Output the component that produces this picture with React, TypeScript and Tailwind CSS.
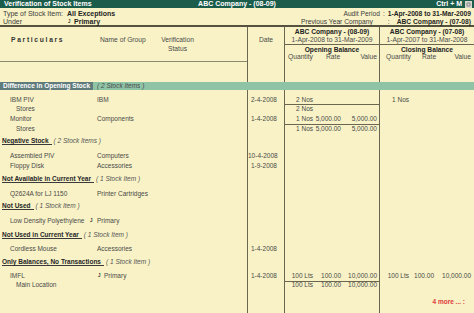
import React from 'react';

type Trio = [string, string, string];

interface Row {
  h: string;
  kind: 'spacer' | 'band' | 'head' | 'item' | 'more';
  name?: string;
  sub?: boolean;
  count?: string;
  group?: string;
  primary?: 'near' | 'far';
  date?: string;
  open?: Trio;
  close?: Trio;
  line?: boolean;
}

const nos2: Trio = ['2 Nos', '', ''];
const nos1: Trio = ['1 Nos', '', ''];
const nosVal: Trio = ['1 Nos', '5,000.00', '5,000.00'];
const lts: Trio = ['100 Lts', '100.00', '10,000.00'];

const rows: Row[] = [
  { h: 'h-[20px]', kind: 'spacer' },
  { h: 'h-[8px]', kind: 'band', name: 'Difference in Opening Stock', count: '( 2 Stock Items )' },
  { h: 'h-[6px]', kind: 'spacer' },
  { h: 'h-[9px]', kind: 'item', name: 'IBM PIV', group: 'IBM', date: '2-4-2008', open: nos2, close: nos1, line: true },
  { h: 'h-[10px]', kind: 'item', name: 'Stores', sub: true, open: nos2 },
  { h: 'h-[10px]', kind: 'item', name: 'Monitor', group: 'Components', date: '1-4-2008', open: nosVal, line: true },
  { h: 'h-[12px]', kind: 'item', name: 'Stores', sub: true, open: nosVal },
  { h: 'h-[15px]', kind: 'head', name: 'Negative Stock', count: '( 2 Stock Items )' },
  { h: 'h-[10px]', kind: 'item', name: 'Assembled PIV', group: 'Computers', date: '10-4-2008' },
  { h: 'h-[13px]', kind: 'item', name: 'Floppy Disk', group: 'Accessories', date: '1-9-2008' },
  { h: 'h-[15px]', kind: 'head', name: 'Not Available in Current Year', count: '( 1 Stock Item )' },
  { h: 'h-[12px]', kind: 'item', name: 'Q2624A for LJ 1150', group: 'Printer Cartridges' },
  { h: 'h-[15px]', kind: 'head', name: 'Not Used', count: '( 1 Stock Item )' },
  { h: 'h-[14px]', kind: 'item', name: 'Low Density Polyethylene', primary: 'near' },
  { h: 'h-[14px]', kind: 'head', name: 'Not Used in Current Year', count: '( 1 Stock Item )' },
  { h: 'h-[13px]', kind: 'item', name: 'Cordless Mouse', group: 'Accessories', date: '1-4-2008' },
  { h: 'h-[14px]', kind: 'head', name: 'Only Balances, No Transactions', count: '( 1 Stock Item )' },
  { h: 'h-[9px]', kind: 'item', name: 'IMFL', primary: 'far', date: '1-4-2008', open: lts, close: lts, line: true },
  { h: 'h-[16px]', kind: 'item', name: 'Main Location', sub: true, open: lts },
  { h: 'h-[16px]', kind: 'more' },
];

const COLS = 'grid grid-cols-[247px_37px_95px_95px]';
const VLINE = 'border-l border-[#6a6650]';

const Glyph = () => <span className="text-[4.5px] font-bold align-super text-[#333]">J</span>;

function Amounts({ v, layout }: { v?: Trio; layout: string }) {
  if (!v) return null;
  return (
    <div className={`grid text-right ${layout}`}>
      <span>{v[0]}</span>
      <span>{v[1]}</span>
      <span>{v[2]}</span>
    </div>
  );
}

function GroupCell({ row }: { row: Row }) {
  if (row.primary === 'near') {
    return (
      <span className="flex">
        <span className="w-[7px]"><Glyph /></span>
        <span>Primary</span>
      </span>
    );
  }
  if (row.primary === 'far') {
    return (
      <span className="flex pl-[8px]">
        <span className="w-[6px]"><Glyph /></span>
        <span>Primary</span>
      </span>
    );
  }
  return <span className="pl-[7px]">{row.group}</span>;
}

function BodyRow({ row }: { row: Row }) {
  if (row.kind === 'band') {
    return (
      <div className={`flex items-center bg-[#8fc3a6] leading-[8px] ${row.h}`}>
        <span className="w-[93px] bg-[#5f7b7b] pl-[3px] font-bold text-white">{row.name}</span>
        <span className="ml-[4px] italic text-[#4a4a4a]">{row.count}</span>
      </div>
    );
  }

  return (
    <div className={`${COLS} leading-[8px] ${row.h}`}>
      {row.kind === 'head' ? (
        <div className="pl-[2px]">
          <span className="border-b border-[#3a3a3a] pr-[3px] font-bold text-[#262626]">{row.name}</span>
          <span className="ml-[2px] italic text-[#555]">{row.count}</span>
        </div>
      ) : row.kind === 'item' ? (
        <div className="grid grid-cols-[90px_1fr]">
          <span className={row.sub ? 'pl-[16px]' : 'pl-[10px]'}>{row.name}</span>
          <GroupCell row={row} />
        </div>
      ) : (
        <div />
      )}
      <div className={`${VLINE} pr-[7px] text-right`}>{row.date}</div>
      <div className={`${VLINE} ${row.line ? 'border-b' : ''}`}>
        <Amounts v={row.open} layout="grid-cols-[28px_28px_36px]" />
      </div>
      <div className={VLINE}>
        {row.kind === 'more' ? (
          <div className="pr-[9px] pt-[1px] text-right font-bold text-[#e0393a]">4 more ... :</div>
        ) : (
          <Amounts v={row.close} layout="grid-cols-[29px_25px_37px]" />
        )}
      </div>
    </div>
  );
}

function BalanceHead({ company, period, title, closing }: { company: string; period: string; title: string; closing?: boolean }) {
  return (
    <div className={VLINE}>
      <div className="h-[18px] border-b border-[#6a6650] pt-[1px] text-center leading-[8px]">
        <div className="font-bold text-[#222]">{company}</div>
        <div>{period}</div>
      </div>
      <div className="pt-[1px] text-center font-bold leading-[7px] text-[#222]">{title}</div>
      <div className={`flex leading-[7px] ${closing ? 'pl-[6px] pr-[3px]' : 'pl-[3px] pr-[2px]'}`}>
        <span className={closing ? 'w-[36px]' : 'w-[38px]'}>Quantity</span>
        <span>Rate</span>
        <span className="ml-auto">Value</span>
      </div>
    </div>
  );
}

export default function App() {
  return (
    <div className="h-[313px] w-[474px] overflow-hidden whitespace-nowrap bg-[#f8f2c6] font-['Liberation_Sans',Arial,sans-serif] text-[6.5px] text-[#4a4a4a]">
      {/* title bar */}
      <div className="grid h-[8px] grid-cols-[1fr_auto_1fr] items-center bg-[#1b5c4b] text-[7px] font-bold leading-[8px] text-white">
        <span className="pl-[4px]">Verification of Stock Items</span>
        <span>ABC Company - (08-09)</span>
        <div className="flex items-center justify-end gap-[3px] pr-[2px]">
          <span>Ctrl + M</span>
          <svg width="7" height="7" viewBox="0 0 7 7">
            <rect x="0" y="0" width="7" height="7" fill="#d6d6cf" />
            <path d="M2 2h3v3H2z" fill="none" stroke="#777" strokeWidth="0.8" />
          </svg>
        </div>
      </div>

      {/* report info */}
      <div className="flex justify-between pt-[2px] text-[7px] text-[#3c3c3c]">
        <div className="pl-[3px]">
          <div className="flex h-[8px] leading-[8px]">
            <span className="w-[58px]">Type of Stock Item</span>
            <span className="w-[6px]">:</span>
            <span className="font-bold text-[#1e1e1e]">All Exceptions</span>
          </div>
          <div className="flex h-[7px] leading-[7px]">
            <span className="w-[65px]">Under</span>
            <span className="w-[6px]"><Glyph /></span>
            <span className="font-bold text-[#1e1e1e]">Primary</span>
          </div>
        </div>
        <div className="pr-[3px] text-[6.7px]">
          <div className="flex h-[8px] justify-end leading-[8px]">
            <span>Audit Period</span>
            <span className="ml-[3px] mr-[3px]">:</span>
            <span className="font-bold text-[#1e1e1e]">1-Apr-2008 to 31-Mar-2009</span>
          </div>
          <div className="flex h-[7px] justify-end leading-[7px]">
            <span>Previous Year Company</span>
            <span className="ml-[15px] mr-[7px]">:</span>
            <span className="font-bold text-[#1e1e1e]">ABC Company - (07-08)</span>
          </div>
        </div>
      </div>
      <div className="h-[2px] bg-[#55523f]" />

      {/* column headings */}
      <div className={`${COLS} h-[35px] text-[6.7px]`}>
        <div className="grid grid-cols-[100px_50px_55px] border-b border-[#8c8a6e] pt-[9px] leading-[8.5px]">
          <span className="pl-[11px] font-bold tracking-[1.7px] text-[#333]">Particulars</span>
          <span>Name of Group</span>
          <span className="text-center">
            Verification
            <br />
            Status
          </span>
        </div>
        <div className={`${VLINE} pt-[9px] text-center leading-[8px]`}>Date</div>
        <BalanceHead company="ABC Company - (08-09)" period="1-Apr-2008 to 31-Mar-2009" title="Opening Balance" />
        <BalanceHead company="ABC Company - (07-08)" period="1-Apr-2007 to 31-Mar-2008" title="Closing Balance" closing />
      </div>

      {/* body */}
      <div>
        {rows.map((row, i) => (
          <BodyRow key={i} row={row} />
        ))}
      </div>
    </div>
  );
}
